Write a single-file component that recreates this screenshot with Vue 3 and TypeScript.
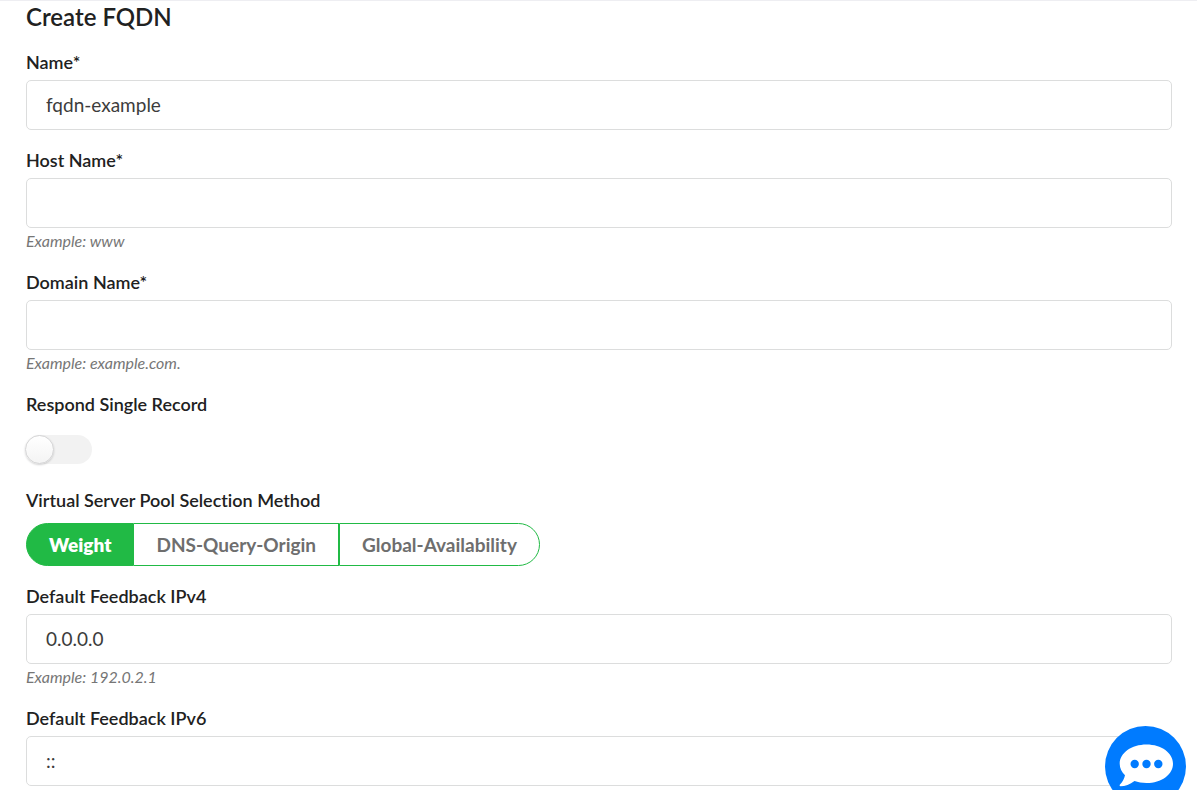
<script setup lang="ts">
import { reactive, ref } from 'vue'

interface TextField {
  id: string
  label: string
  hint?: string
}

const before: TextField[] = [
  { id: 'name', label: 'Name*' },
  { id: 'host', label: 'Host Name*', hint: 'Example: www' },
  { id: 'domain', label: 'Domain Name*', hint: 'Example: example.com.' },
]
const after: TextField[] = [
  { id: 'ipv4', label: 'Default Feedback IPv4', hint: 'Example: 192.0.2.1' },
  { id: 'ipv6', label: 'Default Feedback IPv6' },
]
const values = reactive<Record<string, string>>({
  name: 'fqdn-example',
  host: '',
  domain: '',
  ipv4: '0.0.0.0',
  ipv6: '::',
})

const methods = ['Weight', 'DNS-Query-Origin', 'Global-Availability']
const method = ref('Weight')
const single = ref(false)
</script>

<template>
  <main class="page">
    <h1 class="title">Create FQDN</h1>
    <form class="form" @submit.prevent>
      <div v-for="f in before" :key="f.id" class="field">
        <label class="label" :for="f.id">{{ f.label }}</label>
        <input :id="f.id" v-model="values[f.id]" class="input" type="text" />
        <small v-if="f.hint" class="hint">{{ f.hint }}</small>
      </div>

      <div class="field">
        <label class="label" for="single">Respond Single Record</label>
        <div class="control">
          <input id="single" v-model="single" class="toggle" type="checkbox" role="switch" />
        </div>
      </div>

      <div class="field" role="group" aria-labelledby="method-label">
        <span id="method-label" class="label">Virtual Server Pool Selection Method</span>
        <div class="control">
          <div class="segments">
            <button
              v-for="m in methods"
              :key="m"
              type="button"
              class="segment"
              :class="{ active: m === method }"
              :aria-pressed="m === method"
              @click="method = m"
            >{{ m }}</button>
          </div>
        </div>
      </div>

      <div v-for="f in after" :key="f.id" class="field">
        <label class="label" :for="f.id">{{ f.label }}</label>
        <input :id="f.id" v-model="values[f.id]" class="input" type="text" />
        <small v-if="f.hint" class="hint">{{ f.hint }}</small>
      </div>
    </form>

    <button class="chat" type="button" aria-label="Open chat">
      <svg viewBox="0 0 81 81" aria-hidden="true">
        <path
          fill="#fff"
          d="M41.500 18.500C56.500 18.500 68 27 68 37.700S56.500 57 41.500 57C37 57 33 56.300 29.500 55C25 58.500 20 60.300 15.500 60.300C14.500 60.300 14.300 59.300 15 58.600C17.500 56 19.300 52.500 20 49.200C16.700 46 14.700 42 14.700 37.700C14.700 27 26.500 18.500 41.500 18.500Z"
        />
        <g fill="#007bff">
          <circle cx="29.700" cy="38" r="4.200" />
          <circle cx="41.500" cy="38" r="4.200" />
          <circle cx="53.300" cy="38" r="4.200" />
        </g>
      </svg>
    </button>
  </main>
</template>

<style>
body {
  margin: 0;
  background: #fff;
}
</style>

<style scoped>
.page {
  box-sizing: border-box;
  padding: 0 25px 0 26px;
  border-top: 1px solid #eeeef2;
  font-family: Lato, "Liberation Sans", sans-serif;
  font-variant-ligatures: none;
  color: #212121;
}
.title {
  margin: 0 0 16px;
  font-size: 24px;
  line-height: 32px;
  font-weight: 600;
}
.form {
  display: flex;
  flex-direction: column;
  gap: 18px;
}
.field {
  display: flex;
  flex-direction: column;
}
.label {
  padding-top: 1px;
  margin-bottom: 6px;
  font-size: 18px;
  line-height: 24px;
  font-weight: 600;
}
.input {
  box-sizing: border-box;
  width: 100%;
  height: 50px;
  padding: 0 19px 2px;
  border: 1px solid #dcdddd;
  border-radius: 5px;
  background: #fff;
  font: 400 19px/24px Lato, "Liberation Sans", sans-serif;
  color: #3c3c3c;
  outline: none;
}
.input:focus {
  border-color: #85b7d9;
}
.form {
  gap: 17px;
}
.hint {
  padding-top: 2px;
  font-size: 16px;
  line-height: 22px;
  font-style: italic;
  color: #767676;
}
.control {
  display: flex;
  align-items: flex-end;
  height: 48px;
}
.toggle {
  appearance: none;
  display: flex;
  width: 66px;
  height: 29px;
  margin: 0 0 6px;
  border-radius: 15px;
  background: #f2f2f2;
  cursor: pointer;
}
.toggle::before {
  content: "";
  box-sizing: border-box;
  width: 29px;
  height: 29px;
  margin-left: -1px;
  border: 1px solid #d4d4d5;
  border-radius: 50%;
  background: linear-gradient(#fff, #f4f4f4);
  box-shadow: 0 1px 2px rgba(34, 36, 38, 0.2);
}
.toggle:checked {
  justify-content: flex-end;
  background: #21ba45;
}
.segments {
  display: flex;
  height: 43px;
}
.segment {
  padding: 0 22px;
  border: 1px solid #21ba45;
  background: #fff;
  color: #6e6e6e;
  font: 700 19px/24px Lato, "Liberation Sans", sans-serif;
  font-variant-ligatures: none;
  cursor: pointer;
}
.segment:first-child {
  border-radius: 22px 0 0 22px;
}
.segment:last-child {
  border-radius: 0 22px 22px 0;
}
.segment.active {
  background: #21ba45;
  color: #fff;
  font-weight: 800;
}
.segment.active + .segment {
  border-left: 0;
}
.chat {
  position: fixed;
  right: 11px;
  bottom: -17px;
  width: 81px;
  height: 81px;
  padding: 0;
  border: 0;
  border-radius: 50%;
  background: #007bff;
  cursor: pointer;
}
.chat svg {
  display: block;
  width: 100%;
}
</style>
